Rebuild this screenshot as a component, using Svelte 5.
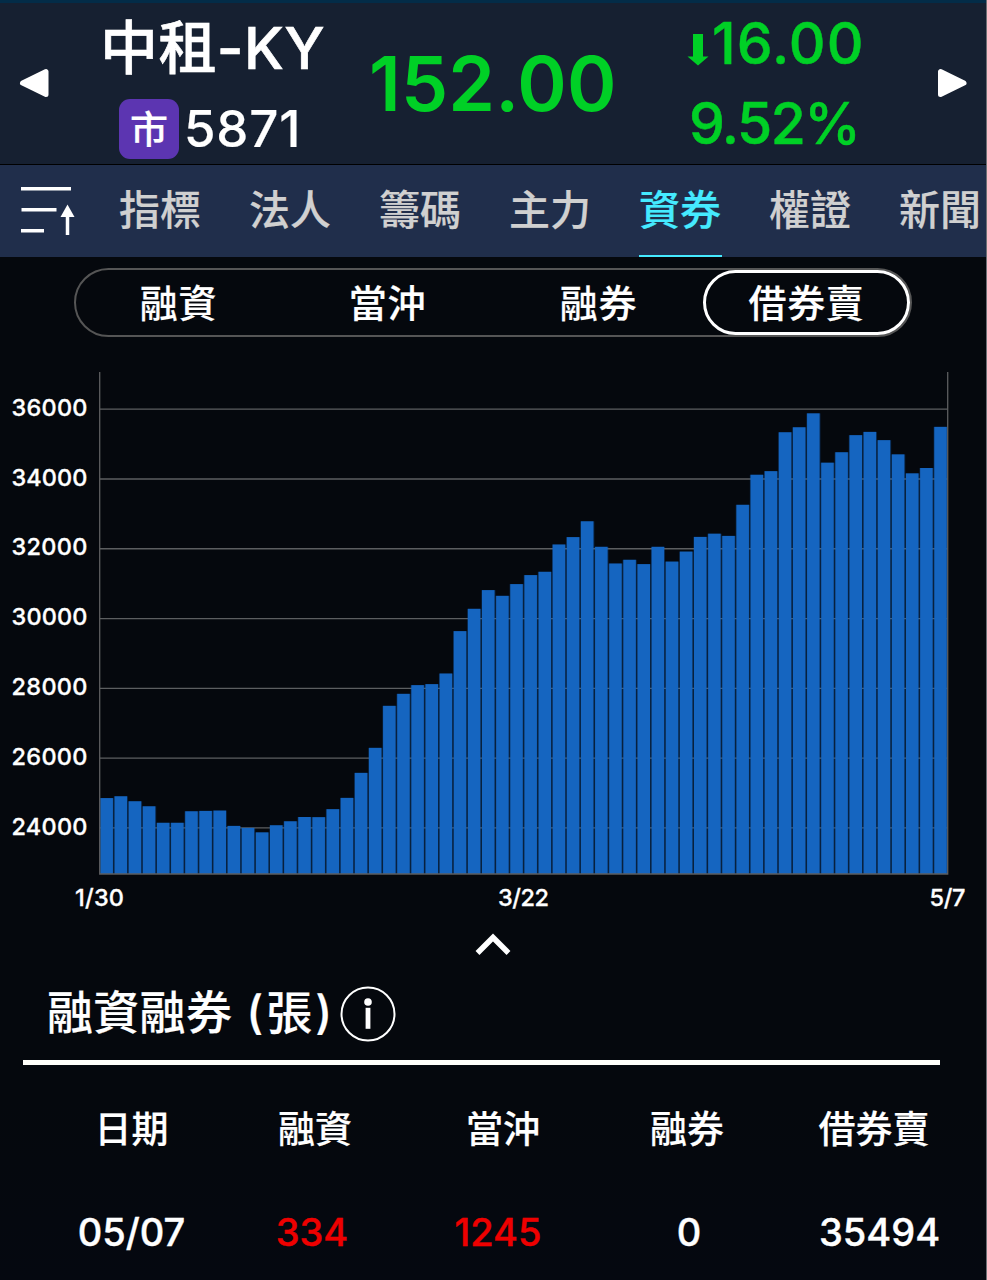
<script lang="ts">
  const stock = {
    name: '中租-KY',
    market: '市',
    code: '5871',
    price: '152.00',
    change: '16.00',
    percent: '9.52%'
  };

  const tabs = ['指標', '法人', '籌碼', '主力', '資券', '權證', '新聞'];
  const segments = ['融資', '當沖', '融券', '借券賣'];
  let activeTab = $state('資券');
  let activeSegment = $state('借券賣');

  const balances = [
    24854, 24906, 24763, 24619, 24146, 24146, 24476, 24487, 24496, 24057,
    24000, 23871, 24075, 24189, 24312, 24307, 24536, 24860, 25577, 26294,
    27498, 27842, 28091, 28120, 28424, 29639, 30279, 30815, 30651, 30987,
    31245, 31340, 32122, 32334, 32787, 32056, 31577, 31684, 31560, 32056,
    31632, 31919, 32340, 32432, 32369, 33260, 34121, 34224, 35339, 35482,
    35881, 34467, 34766, 35256, 35350, 35113, 34705, 34161, 34315, 35494
  ];
  const ticks = [36000, 34000, 32000, 30000, 28000, 26000, 24000];
  const dates = [
    { label: '1/30', x: 99.5, width: 49 },
    { label: '3/22', x: 523.5, width: 51 },
    { label: '5/7', x: 947.5, width: 36 }
  ];

  const left = 99.7;
  const right = 947.7;
  const bottom = 517;
  const step = (right - left) / balances.length;
  const y = (value: number) => 52.2 + (36000 - value) * 0.03489;

  const headers = ['日期', '融資', '當沖', '融券', '借券賣'];
  const rows = [
    [
      { text: '05/07' },
      { text: '334', up: true },
      { text: '1245', up: true },
      { text: '0' },
      { text: '35494' }
    ]
  ];
</script>

<div class="screen">
  <header class="quote">
    <button class="arrow" aria-label="previous">
      <svg width="32" height="32" viewBox="0 0 32 32">
        <path d="M4.5 16 L28 4.5 V27.5 Z" />
      </svg>
    </button>
    <div class="title">
      <div class="name">{stock.name}</div>
      <div class="code">
        <span class="market">{stock.market}</span>
        <span>{stock.code}</span>
      </div>
    </div>
    <div class="price">{stock.price}</div>
    <div class="diff">
      <div class="change">
        <svg width="22" height="32" viewBox="0 0 22 32">
          <path d="M6 0 H16 V22.5 H21.5 L11 31.5 L.5 22.5 H6 Z" />
        </svg>
        <span>{stock.change}</span>
      </div>
      <div class="percent">{stock.percent}</div>
    </div>
    <button class="arrow" aria-label="next">
      <svg width="32" height="32" viewBox="0 0 32 32">
        <path d="M28 16 L4.5 4.5 V27.5 Z" />
      </svg>
    </button>
  </header>

  <nav class="tabs">
    <svg class="sort" width="56" height="52" viewBox="0 0 56 52">
      <path d="M1 4.7 H51 M1.5 25.8 H36.5 M1 46.7 H24" />
      <path d="M47.5 51 V28" />
      <path class="head" d="M47.5 20.5 L54.5 33 H40.5 Z" />
    </svg>
    {#each tabs as tab}
      <button
        class="tab"
        class:active={tab === activeTab}
        onclick={() => (activeTab = tab)}>{tab}</button
      >
    {/each}
  </nav>

  <div class="segments">
    {#each segments as segment}
      <button
        class="segment"
        class:active={segment === activeSegment}
        onclick={() => (activeSegment = segment)}>{segment}</button
      >
    {/each}
  </div>

  <svg class="chart" width="986" height="563" viewBox="0 0 986 563">
    {#each ticks as tick}
      <line class="grid" x1={left} x2={right} y1={y(tick)} y2={y(tick)} />
      <text class="tick" x="11.5" y={y(tick) + 6.7} textLength="76">{tick}</text>
    {/each}
    {#each balances as value, i}
      <rect
        class="gutter"
        x={left + i * step}
        y={y(value)}
        width={step}
        height={bottom - y(value)}
      />
      <rect
        class="bar"
        x={left + i * step + 0.7}
        y={y(value)}
        width={step - 1.6}
        height={bottom - y(value)}
      />
    {/each}
    <path class="axis" d="M{left} 15 V{bottom} H{right} V15" />
    {#each dates as date}
      <text class="date" x={date.x} y="548.6" textLength={date.width}
        >{date.label}</text
      >
    {/each}
  </svg>

  <button class="collapse" aria-label="collapse">
    <svg width="40" height="28" viewBox="0 0 40 28">
      <path d="M4.5 22 L20 6.5 L35.5 22" />
    </svg>
  </button>

  <section class="margin">
    <h2>
      <span class="label">融資融券</span>
      <span class="label unit">(張)</span>
      <svg width="56" height="56" viewBox="0 0 56 56">
        <circle class="ring" cx="28" cy="28" r="26.5" />
        <circle cx="28" cy="16" r="3.8" />
        <rect x="25.6" y="21.8" width="4.8" height="21" />
      </svg>
    </h2>
    <div class="row head">
      {#each headers as header}
        <span>{header}</span>
      {/each}
    </div>
    {#each rows as row}
      <div class="row">
        {#each row as cell}
          <span class:up={cell.up}>{cell.text}</span>
        {/each}
      </div>
    {/each}
  </section>
</div>

<style>
  :global(body) {
    background: #05080d;
  }
  .screen {
    box-sizing: border-box;
    width: 987px;
    height: 1280px;
    overflow: hidden;
    border-right: 1px solid #6d7075;
    background: linear-gradient(#05080d 1100px, #050810 1280px);
    color: #fff;
    font-family: Inter, 'Noto Sans CJK TC', sans-serif;
    font-weight: 500;
    -webkit-text-stroke: 0.2px;
  }
  button {
    border: none;
    padding: 0;
    background: none;
    color: inherit;
    font: inherit;
    cursor: pointer;
  }
  svg {
    display: block;
    flex: none;
  }
  .quote {
    box-sizing: border-box;
    display: grid;
    grid-template-columns: 68px 287px 275px 288px 68px;
    height: 164px;
    border-top: 3px solid #032c48;
    background: #162031;
  }
  .arrow {
    display: flex;
    align-items: center;
    justify-content: center;
    padding-bottom: 2px;
  }
  .arrow svg {
    fill: #fff;
    stroke: #fff;
    stroke-width: 5;
    stroke-linejoin: round;
    overflow: visible;
  }
  .title {
    display: flex;
    flex-direction: column;
  }
  .name {
    padding-left: 32px;
    line-height: 91px;
    font-size: 58px;
    letter-spacing: 0.4px;
    white-space: nowrap;
    -webkit-text-stroke: 0.6px;
  }
  .code {
    display: flex;
    align-items: center;
    gap: 5px;
    height: 69px;
    padding-left: 51px;
    font-size: 51px;
    letter-spacing: 0.8px;
    line-height: 72px;
  }
  .market {
    width: 60px;
    height: 60px;
    border-radius: 11px;
    background: #5c35b1;
    font-size: 38px;
    letter-spacing: 0;
    line-height: 60px;
    text-align: center;
  }
  .price {
    padding-left: 14px;
    font-size: 75px;
    font-weight: 600;
    letter-spacing: 0.2px;
    line-height: 162px;
  }
  .price,
  .diff {
    color: #00d026;
    -webkit-text-stroke: 0;
  }
  .diff {
    padding-left: 57px;
    font-size: 57px;
    white-space: nowrap;
    -webkit-text-stroke: 0.5px;
  }
  .change {
    display: flex;
    height: 80px;
    letter-spacing: 1.1px;
    line-height: 81px;
  }
  .change svg {
    margin: 31px 3px 0 0;
    fill: #00d026;
  }
  .percent {
    padding-left: 2px;
    letter-spacing: -1.5px;
    line-height: 81px;
  }
  .tabs {
    display: flex;
    gap: 47px;
    height: 92px;
    border-top: 1px solid #000;
    background: #202e4b;
    overflow: hidden;
  }
  .sort {
    margin: 19px -4.5px 0 20px;
    fill: none;
    stroke: #fff;
    stroke-width: 3.5;
  }
  .sort .head {
    fill: #fff;
    stroke: none;
  }
  .tab {
    box-sizing: border-box;
    flex: none;
    width: 83px;
    border-bottom: 2px solid transparent;
    color: #d0d0d0;
    font-size: 41px;
    line-height: 90px;
    white-space: nowrap;
  }
  .tab.active {
    border-color: #45eaff;
    color: #45eaff;
  }
  .segments {
    box-sizing: border-box;
    display: grid;
    grid-template-columns: 205px 213px 209px 207px;
    width: 838px;
    height: 69px;
    margin: 11px 0 0 74px;
    border: 2px solid #555;
    border-radius: 35px;
  }
  .segment {
    box-sizing: border-box;
    border-radius: 33px;
    font-size: 38px;
    letter-spacing: 0.7px;
    line-height: 61px;
    padding-top: 1px;
  }
  .segment.active {
    border: 3px solid #fff;
    line-height: 57px;
  }
  .chart {
    margin-top: 20px;
  }
  .grid,
  .axis {
    fill: none;
    stroke: #5c5e60;
    stroke-width: 1.3;
  }
  .gutter {
    fill: #1565c0;
    opacity: 0.3;
  }
  .bar {
    fill: #1565c0;
  }
  .tick,
  .date {
    fill: #fff;
    stroke: #fff;
    stroke-width: 0.3;
    font-size: 23.5px;
    -webkit-text-stroke: 0;
  }
  .date {
    text-anchor: middle;
  }
  .collapse {
    display: block;
    margin: 11px auto 0;
  }
  .collapse svg {
    fill: none;
    stroke: #fff;
    stroke-width: 5.5;
  }
  .margin {
    width: 917px;
    margin: 8px 0 0 23px;
  }
  h2 {
    display: flex;
    align-items: center;
    height: 93px;
    margin: 0;
    padding-left: 24px;
    border-bottom: 5px solid #fffffa;
    font-size: 46px;
    font-weight: 500;
    letter-spacing: 0.3px;
  }
  .label {
    line-height: 50px;
    padding-bottom: 3px;
  }
  .unit {
    margin: 0 5px 0 14px;
    letter-spacing: 3px;
  }
  h2 svg {
    fill: #fff;
  }
  h2 .ring {
    fill: none;
    stroke: #fff;
    stroke-width: 2;
  }
  .row {
    display: grid;
    grid-template-columns: 199px 162px 210px 172px 209px;
    margin-left: 9px;
    font-size: 38px;
    line-height: 103px;
    text-align: center;
    -webkit-text-stroke: 0.4px;
  }
  .row.head {
    grid-template-columns: 199px 168px 208px 160px 214px;
    height: 116px;
    font-size: 37px;
    line-height: 129px;
    -webkit-text-stroke: 0.2px;
  }
  .up {
    color: #ee0000;
  }
</style>
